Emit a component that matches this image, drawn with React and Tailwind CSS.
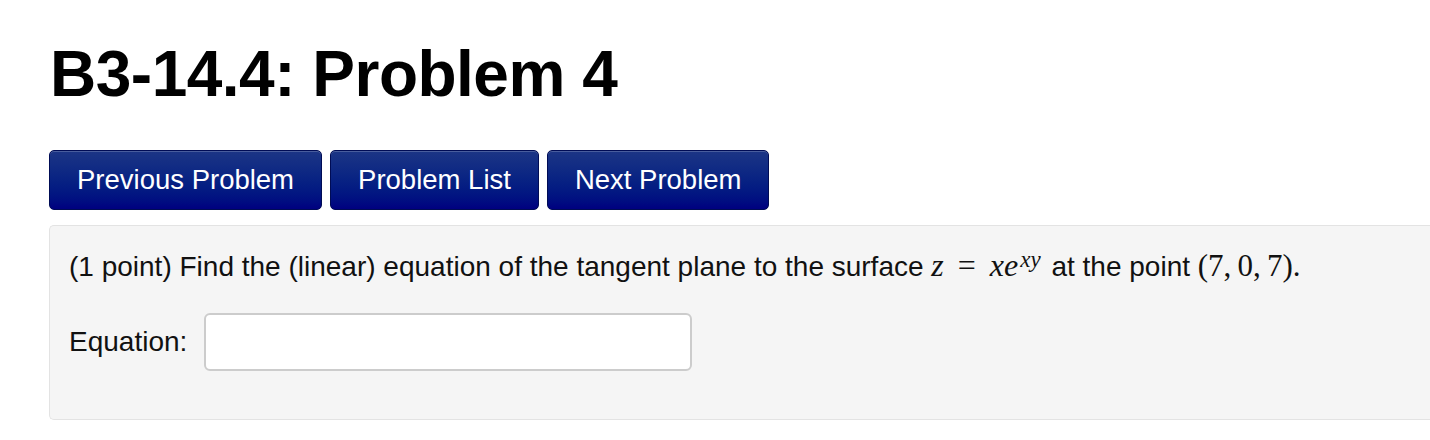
export default function App() {
  const serif = "font-['Liberation_Serif','Times_New_Roman',serif]";
  return (
    <div className="w-[1430px] h-[440px] overflow-hidden bg-white font-['Liberation_Sans',Arial,sans-serif] text-black">
      <div className="pl-[50px] pt-[38px]">
        <h1 className="text-[64px] font-bold leading-[72px] tracking-[-0.5px]">B3-14.4: Problem 4</h1>
      </div>

      <div className="flex gap-[8px] pl-[49px] mt-[40px]">
        {["Previous Problem", "Problem List", "Next Problem"].map((t) => (
          <button
            key={t}
            className="h-[60px] px-[27px] rounded-[5px] border border-[#000c55] bg-gradient-to-b from-[#1c3585] to-[#000080] text-white text-[27.5px] leading-none shadow-[inset_0_1px_0_rgba(255,255,255,0.2)]"
          >
            {t}
          </button>
        ))}
      </div>

      <div className="ml-[49px] mt-[15px] h-[195px] bg-[#f5f5f5] border border-[#e3e3e3] rounded-l-[5px] border-r-0 pl-[19px] pt-[23px] text-[28px] text-[#111]">
        <p className="leading-[32px] h-[32px] whitespace-nowrap">
          (1 point) Find the (linear) equation of the tangent plane to the surface{" "}
          <span className={`${serif} text-[32px] leading-none`}>
            <i>z</i>
            <span className="mx-[14px]">=</span>
            <i>xe</i>
            <sup className="text-[23px] relative -top-[9px] ml-[2px] mr-[3px]"><i>xy</i></sup>
          </span>{" "}
          at the point{" "}
          <span className={`${serif} text-[31px] leading-none`}>(7,&thinsp;0,&thinsp;7).</span>
        </p>
        <div className="flex items-center gap-[17px] mt-[32px]">
          <span className="leading-[32px]">Equation:</span>
          <input
            type="text"
            className="w-[488px] h-[58px] bg-white border-2 border-[#cccccc] rounded-[6px] outline-none"
          />
        </div>
      </div>
    </div>
  );
}
